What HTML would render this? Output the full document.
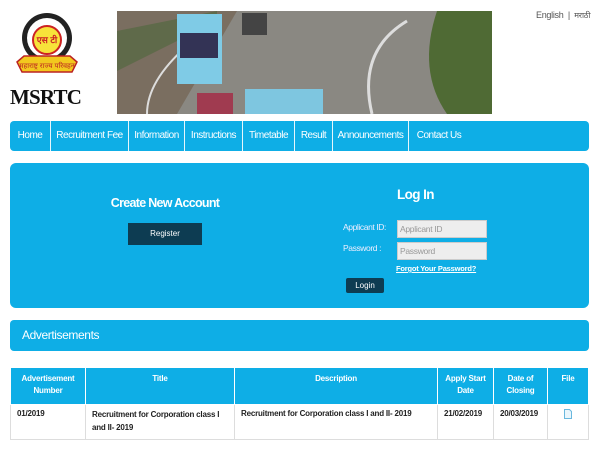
<!DOCTYPE html>
<html><head><meta charset="utf-8"><style>
*{margin:0;padding:0;box-sizing:border-box}
body{width:600px;height:450px;background:#fff;font-family:"Liberation Sans",Arial,sans-serif;position:relative;overflow:hidden}
.a{position:absolute}
.blue{background:#0eaee6}
.nav{left:10px;top:121px;width:579px;height:30px;border-radius:4px;display:flex;color:#fff;font-size:10px;letter-spacing:-.5px}
.nav div{height:30px;line-height:30px;border-right:1px solid #e6f6fc;text-align:center;white-space:nowrap}
.inp{background:#eee;border:1px solid #ccc;color:#999;font-size:8.5px;letter-spacing:-.3px;padding-left:2px;line-height:16px;width:90px;height:18px}
table{border-collapse:collapse;font-size:8px;font-weight:bold;letter-spacing:-.2px}
td,th{border:1px solid #ddd;vertical-align:top;padding:4px 6px}
th{background:#0eaee6;color:#fff;border-color:#fff;text-align:center;line-height:12px;padding:5px 3px}
</style></head><body>
<svg class="a" style="left:14px;top:10px" width="66" height="68" viewBox="0 0 66 68">
<circle cx="33" cy="28" r="25" fill="#222"/>
<circle cx="33" cy="28" r="20" fill="#fff"/>
<circle cx="33" cy="30" r="14" fill="#f7e23a" stroke="#c22" stroke-width="2"/>
<text x="33" y="33" font-size="9" text-anchor="middle" fill="#c22" font-weight="bold">एस टी</text>
<path d="M3 52 L10 46 L56 46 L63 52 L58 62 L8 62 Z" fill="#f2c81e" stroke="#b22" stroke-width="1.5"/>
<text x="33" y="58" font-size="7" text-anchor="middle" fill="#b22">महाराष्ट्र राज्य परिवहन</text>
</svg>
<div class="a" style="left:10px;top:85px;font:bold 21px 'Liberation Serif',serif;color:#111;letter-spacing:-.8px">MSRTC</div>
<svg class="a" style="left:117px;top:11px" width="375" height="103" viewBox="0 0 375 103">
<rect width="375" height="103" fill="#8a8882"/>
<path d="M0 0H120L60 103H0Z" fill="#7a6e60"/>
<path d="M0 20L100 0V10L20 50L0 60Z" fill="#5f6a4a"/>
<path d="M320 0H375V103H330Q300 60 320 0Z" fill="#4f6a34"/>
<path d="M290 10Q240 40 255 103" stroke="#ddd" stroke-width="3" fill="none"/>
<path d="M70 35Q30 70 30 103" stroke="#ddd" stroke-width="2" fill="none"/>
<rect x="60" y="3" width="45" height="70" fill="#7fcbe6"/><rect x="63" y="22" width="38" height="25" fill="#335"/>
<rect x="128" y="78" width="78" height="25" fill="#7ec6e0"/>
<rect x="80" y="82" width="36" height="21" fill="#a03b50"/>
<rect x="125" y="2" width="25" height="22" fill="#444"/>
</svg>
<div class="a" style="left:536px;top:10px;font-size:9px;color:#555;letter-spacing:-.3px">English &nbsp;|&nbsp; <span style="font-size:8px;font-family:'Noto Sans CJK SC',sans-serif">मराठी</span></div>
<div class="a blue nav">
<div style="width:41px">Home</div><div style="width:78px">Recruitment Fee</div><div style="width:56px">Information</div><div style="width:58px">Instructions</div><div style="width:52px">Timetable</div><div style="width:38px">Result</div><div style="width:76px">Announcements</div><div style="width:60px;border:0">Contact Us</div>
</div>
<div class="a blue" style="left:10px;top:163px;width:579px;height:145px;border-radius:6px"></div>
<div class="a" style="left:90px;top:196px;width:150px;text-align:center;color:#fff;font-size:12.5px;font-weight:bold;letter-spacing:-.7px">Create New Account</div>
<div class="a" style="left:128px;top:223px;width:74px;height:22px;background:#0d3c52;color:#fff;font-size:8px;text-align:center;line-height:22px">Register</div>
<div class="a" style="left:397px;top:187px;color:#fff;font-size:13.5px;font-weight:bold;letter-spacing:-.6px">Log In</div>
<div class="a" style="left:343px;top:222px;color:#eef;font-size:8.5px;letter-spacing:-.4px">Applicant ID:</div>
<div class="a" style="left:343px;top:243px;color:#eef;font-size:8.5px;letter-spacing:-.4px">Password :</div>
<div class="a inp" style="left:397px;top:220px">Applicant ID</div>
<div class="a inp" style="left:397px;top:242px">Password</div>
<div class="a" style="left:396px;top:264px;color:#fff;font-size:7.5px;font-weight:bold;text-decoration:underline;letter-spacing:-.2px">Forgot Your Password?</div>
<div class="a" style="left:346px;top:278px;width:38px;height:15px;background:#0d3c52;color:#fff;font-size:8px;text-align:center;line-height:15px;border-radius:2px">Login</div>
<div class="a blue" style="left:10px;top:320px;width:579px;height:31px;border-radius:4px;color:#fff;font-size:12px;letter-spacing:-.4px;line-height:31px;padding-left:12px">Advertisements</div>
<table class="a" style="left:10px;top:367px;width:579px">
<tr style="height:37px"><th style="width:75px">Advertisement<br>Number</th><th style="width:149px">Title</th><th style="width:203px">Description</th><th style="width:56px">Apply Start<br>Date</th><th style="width:54px">Date of<br>Closing</th><th>File</th></tr>
<tr style="height:35px;color:#222"><td>01/2019</td><td style="line-height:13px;padding-top:3px">Recruitment for Corporation class I and II- 2019</td><td>Recruitment for Corporation class I and II- 2019</td><td>21/02/2019</td><td>20/03/2019</td><td style="text-align:center"><svg width="8" height="10"><path d="M.5 .5H5.5L7.5 2.5V9.5H.5Z" fill="#eaf6fc" stroke="#6ab8de"/></svg></td></tr>
</table>
</body></html>
